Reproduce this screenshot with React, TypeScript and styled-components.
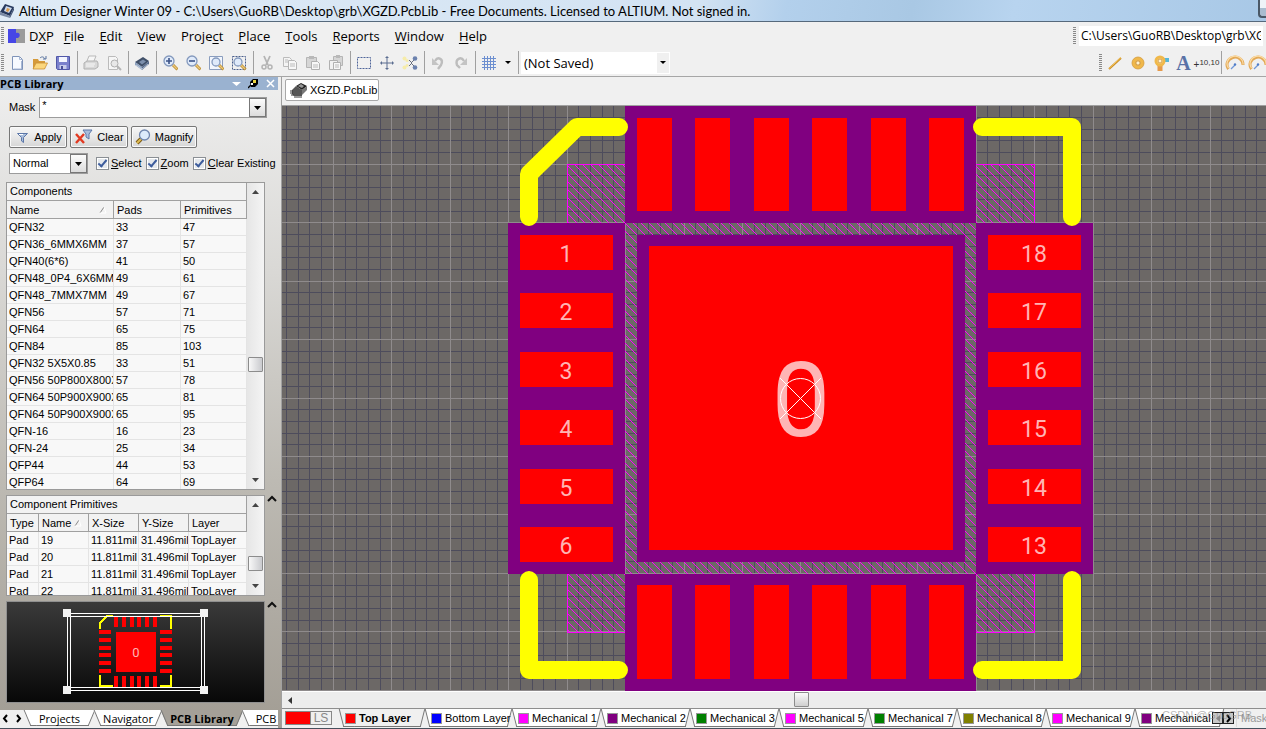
import React from 'react';
import styled, { createGlobalStyle } from 'styled-components';

const UI = '"Open Sans", "Noto Sans", sans-serif';
const TITLE = 'Lato, "Open Sans", sans-serif';
const SMALL = '"Liberation Sans", Arial, sans-serif';
const PAD_FONT = 'Roboto, "Liberation Sans", sans-serif';

const GlobalStyle = createGlobalStyle`
  *, *::before, *::after { box-sizing: border-box; }
  html, body { margin: 0; }
  body { background: #f0f0f0; color: #000; font: 11px/17px ${SMALL}; overflow: hidden; }
  button, input, select { font: inherit; color: inherit; margin: 0; }
  #root { min-height: 100vh; }
`;

/* ---------- frame ---------- */
const Frame = styled.div`
  display: flex;
  flex-direction: column;
  height: 100vh;
  border-bottom: 1px solid #46505c;
`;

const TitleBar = styled.header`
  display: flex;
  align-items: center;
  justify-content: space-between;
  flex: none;
  height: 22px;
  border-bottom: 1px solid #56697c;
  background: linear-gradient(100deg, #dfebf6 0%, #d3e3f3 55%, #b3d0ec 62%, #a9c8e4 72%, #b8d4ef 80%, #a8c8e6 100%);
  font: 13px/20px ${TITLE};
  white-space: nowrap;
  overflow: hidden;
`;

const TitleText = styled.h1`
  display: flex;
  align-items: center;
  gap: 3px;
  margin: 0;
  font: inherit;
`;

const WindowButton = styled.button`
  align-self: flex-start;
  flex: none;
  width: 8px;
  height: 18px;
  padding: 0;
  border: 1px solid #4a5866;
  border-width: 0 0 2px 2px;
  border-radius: 0 0 0 4px;
  background: linear-gradient(#eef3f8 50%, #a9bccf 50%);
`;

const MenuRow = styled.nav`
  display: flex;
  align-items: center;
  flex: none;
  height: 27px;
  background: #f0f0f0;
  font: 13px/20px ${UI};
`;

const Menus = styled.div`
  display: flex;
  flex: 1;
  gap: 15px;
  min-width: 0;
`;

const MenuButton = styled.button`
  padding: 0;
  border: 0;
  background: none;
  white-space: nowrap;
  u { text-underline-offset: 2px; }
`;

const DxpLabel = styled.span`
  display: flex;
  align-items: center;
  gap: 4px;
  margin: 0 -5px 0 3px;
`;

const Grip = styled.span`
  flex: none;
  width: 3px;
  height: 18px;
  margin: 0 1px;
  background: repeating-linear-gradient(#8a8a8a 0 1px, #f0f0f0 1px 2px);
`;

const PathInput = styled.input`
  flex: none;
  width: 184px;
  height: 20px;
  margin: 0 3px 0 2px;
  padding: 0 2px;
  border: 0;
  background: #fff;
  font-size: 12px;
`;

const ToolRow = styled.div`
  display: flex;
  align-items: center;
  flex: none;
  height: 28px;
  border-bottom: 1px solid #a6a6a6;
  background: #f0f0f0;
  overflow: hidden;
`;

const PlaceTools = styled.div`
  display: flex;
  align-items: center;
  margin: 0 -3px 0 auto;
`;

const ToolButton = styled.button<{ $w?: number }>`
  display: flex;
  align-items: center;
  justify-content: center;
  flex: none;
  width: ${p => p.$w ?? 23}px;
  height: 22px;
  padding: 0;
  border: 0;
  background: none;
`;

const Divider = styled.span`
  flex: none;
  width: 1px;
  height: 23px;
  margin: 0 1px 0 3px;
  background: #a0a0a0;
`;

const SavedCombo = styled.label`
  display: flex;
  align-items: center;
  width: 149px;
  height: 22px;
  margin-left: 1px;
  background: #fff;
  font: 13px/20px ${UI};
`;

const PlainSelect = styled.select`
  appearance: none;
  width: 100%;
  height: 100%;
  padding: 0 3px;
  border: 0;
  background: none;
  outline: 0;
`;

const FlatArrow = styled.span`
  display: flex;
  align-items: center;
  justify-content: center;
  flex: none;
  width: 12px;
  height: 20px;
  margin-right: 1px;
  background: #f0f0f0;
`;

/* ---------- body ---------- */
const Body = styled.div`
  display: flex;
  flex: 1;
  min-height: 0;
`;

const Side = styled.aside`
  display: flex;
  flex-direction: column;
  flex: none;
  width: 282px;
  border-right: 1px solid #a0a0a0;
  background: linear-gradient(#efefef, #d9d8d5 30%, #bdbab3 62%, #a29d94);
`;

const SideHeader = styled.header`
  display: flex;
  align-items: center;
  gap: 7px;
  flex: none;
  height: 13px;
  margin-right: 3px;
  padding-right: 3px;
  background: #9ab2d0;
`;

const SideTitle = styled.h2`
  flex: 1;
  margin: 0;
  font: bold 11px/13px ${UI};
`;

const BareButton = styled.button`
  display: flex;
  flex: none;
  padding: 0;
  border: 0;
  background: none;
`;

const Controls = styled.div`
  display: flex;
  flex-direction: column;
  gap: 5px;
  flex: none;
  padding: 7px 0 8px 9px;
`;

const ControlRow = styled.div<{ $gap: number; $pad?: number }>`
  display: flex;
  align-items: center;
  gap: ${p => p.$gap}px;
  padding-top: ${p => p.$pad ?? 0}px;
  white-space: nowrap;
`;

const ComboBox = styled.span<{ $w: number }>`
  display: flex;
  width: ${p => p.$w}px;
  height: 21px;
  border: 1px solid #9c9c9c;
  background: #fff;
`;

const MaskInput = styled.input`
  flex: 1;
  min-width: 0;
  padding: 0 2px 4px;
  border: 0;
  outline: 0;
  background: none;
`;

const DropArrow = styled.span`
  display: flex;
  align-items: center;
  justify-content: center;
  flex: none;
  width: 17px;
  border: 1px solid #777;
  background: linear-gradient(#fcfcfc, #dcdcdc);
`;

const PushButton = styled.button<{ $w: number }>`
  display: flex;
  align-items: center;
  justify-content: center;
  gap: 4px;
  width: ${p => p.$w}px;
  height: 22px;
  padding: 0;
  border: 1px solid #777;
  border-radius: 2px;
  background: linear-gradient(#f6f6f6, #e8e8e8 50%, #d6d6d6);
  box-shadow: inset 0 0 0 1px #fafafa;
`;

const Checks = styled.div`
  display: flex;
  gap: 4px;
  margin-left: 4px;
`;

const CheckLabel = styled.label`
  display: flex;
  align-items: center;
  gap: 2px;
`;

const Check = styled.input`
  appearance: none;
  display: flex;
  justify-content: center;
  width: 13px;
  height: 13px;
  border: 1px solid #8a8f94;
  background: #e4e8ec;
  box-shadow: inset 0 0 0 1px #fff;
  &:checked::after {
    content: '';
    width: 5px;
    height: 9px;
    border: solid #3c5c9c;
    border-width: 0 2px 2px 0;
    transform: rotate(40deg);
  }
`;

const ListFrame = styled.div<{ $h: number }>`
  display: flex;
  flex: none;
  width: 259px;
  height: ${p => p.$h}px;
  border: 1px solid #9a9a9a;
  background: #f0f0f0;
`;

const TableClip = styled.div`
  flex: 1;
  min-width: 0;
  overflow: hidden;
`;

const Table = styled.table`
  width: 100%;
  table-layout: fixed;
  border-collapse: separate;
  border-spacing: 0;
  caption {
    height: 18px;
    padding: 0 3px;
    border-right: 1px solid #a0a0a0;
    border-bottom: 1px solid #a0a0a0;
    text-align: left;
    background: #f2f2f2;
  }
  th, td {
    height: 17px;
    padding: 0 0 0 2px;
    line-height: 16px;
    font-weight: normal;
    text-align: left;
    white-space: nowrap;
    overflow: hidden;
  }
  th {
    height: 18px;
    padding-left: 3px;
    border-right: 1px solid #a0a0a0;
    border-bottom: 1px solid #a0a0a0;
    background: #f2f2f2;
  }
  td {
    border-right: 1px solid #e4e4e4;
    border-bottom: 1px solid #e4e4e4;
    background: #f8f8f8;
  }
`;

const HeadCell = styled.span`
  display: flex;
  align-items: center;
  justify-content: space-between;
  padding-right: 6px;
`;

const ScrollTrack = styled.div<{ $thumb: number }>`
  display: flex;
  flex-direction: column;
  align-items: center;
  justify-content: space-between;
  position: relative;
  flex: none;
  width: 17px;
  padding: 7px 0;
  background: linear-gradient(90deg, #e6e6e6, #f4f4f4);
  &::after {
    content: '';
    position: absolute;
    top: ${p => p.$thumb}%;
    left: 1px;
    width: 15px;
    height: 15px;
    border: 1px solid #8c8c8c;
    border-radius: 1px;
    background: linear-gradient(90deg, #f8f8f8, #c9cace);
  }
`;

const Section = styled.section`
  display: flex;
  align-items: flex-start;
  gap: 2px;
  flex: none;
  margin: 0 0 5px 6px;
`;

const Preview = styled.div`
  width: 259px;
  height: 102px;
  border: 1px solid #909090;
  background: linear-gradient(#3a3a3a, #080808);
`;

const PanelTabs = styled.div`
  display: flex;
  align-items: flex-start;
  gap: 5px;
  flex: none;
  height: 18px;
  margin: auto 3px 0 0;
  padding-left: 1px;
  background: #f0f0f0;
  overflow: hidden;
  font: 11px/15px ${UI};
`;

const NavArrows = styled.span`
  display: flex;
  gap: 8px;
  width: 29px;
  padding: 4px 0 0 1px;
`;

const SlantTab = styled.button<{ $w: number; $on?: boolean; $fill: string }>`
  position: relative;
  z-index: 0;
  display: flex;
  align-items: center;
  justify-content: center;
  flex: none;
  width: ${p => p.$w}px;
  height: 16px;
  padding: 0;
  border: 0;
  background: none;
  line-height: 15px;
  font-weight: ${p => (p.$on ? 'bold' : 'normal')};
  white-space: nowrap;
  &::before, &::after {
    content: '';
    position: absolute;
    z-index: -1;
    top: 0;
    bottom: 0;
    width: 80%;
    background: ${p => p.$fill};
    border: 0 solid #777;
    border-bottom-width: 1px;
  }
  &::before { left: 0; border-left-width: 1px; transform: skewX(23deg); }
  &::after { right: 0; border-right-width: 1px; transform: skewX(-23deg); }
`;

/* ---------- editor ---------- */
const Editor = styled.main`
  display: flex;
  flex-direction: column;
  flex: 1;
  min-width: 0;
`;

const DocTabs = styled.div`
  display: flex;
  align-items: center;
  flex: none;
  height: 29px;
  padding: 0 3px 2px;
  border-bottom: 1px solid #a0a0a0;
`;

const DocTab = styled.button`
  display: flex;
  align-items: center;
  gap: 2px;
  height: 22px;
  padding: 0 1px 0 4px;
  border: 1px solid #a8a8a8;
  border-radius: 2px;
  background: #fff;
`;

const Canvas = styled.div`
  flex: 1;
  min-height: 0;
  overflow: hidden;
  background: #6c6866;
  svg { display: block; }
`;

const HScroll = styled.div`
  display: flex;
  align-items: center;
  position: relative;
  flex: none;
  height: 17px;
  padding-left: 6px;
  border-top: 1px solid #fff;
  background: #ededed;
`;

const HThumb = styled.span`
  position: absolute;
  left: 52%;
  top: 0;
  width: 15px;
  height: 15px;
  border: 1px solid #8c8c8c;
  border-radius: 1px;
  background: linear-gradient(#fbfbfb, #d0d0d0);
`;

const LayerRow = styled.div`
  display: flex;
  position: relative;
  flex: none;
  height: 20px;
  padding-left: 3px;
  border-top: 1px solid #8e8e8e;
  overflow: hidden;
`;

const LayerSet = styled.button`
  display: flex;
  flex: none;
  width: 47px;
  height: 14px;
  margin: 2px 9px 0 0;
  padding: 0;
  border: 1px solid #888;
  background: #f0f0f0;
  color: #888;
  line-height: 13px;
  font-size: 12px;
  &::before { content: ''; width: 25px; height: 12px; background: #f00; border-right: 1px solid #888; }
  span { flex: 1; }
`;

const LayerTab = styled(SlantTab)`
  justify-content: flex-start;
  gap: 3px;
  height: 18px;
  margin-right: 4px;
  padding-left: 4px;
  &::before { transform: skewX(14deg); }
  &::after { transform: skewX(-14deg); }
`;

const Swatch = styled.span<{ $c: string }>`
  flex: none;
  width: 11px;
  height: 11px;
  border: 1px solid #999;
  background: ${p => p.$c};
`;

const LayerTail = styled.div`
  display: flex;
  align-items: center;
  position: absolute;
  right: 0;
  top: 0;
  height: 18px;
  color: #9a9a9a;
`;

const TailLabel = styled.span`
  width: 30px;
  margin-left: 2px;
  padding-left: 4px;
  line-height: 18px;
  border-left: 1px solid #ddd;
  background: #f0f0f0;
  overflow: hidden;
`;

const TailArrow = styled.button`
  display: flex;
  align-items: center;
  justify-content: center;
  width: 11px;
  height: 12px;
  padding: 0;
  border: 1px solid #222;
  background: #c8c8c8;
`;

const Watermark = styled.span`
  position: absolute;
  right: 14px;
  top: -2px;
  color: #8889;
  font: 11px/17px ${SMALL};
`;

/* ---------- small glyphs ---------- */
const Down = ({ c = '#000', w = 7 }: { c?: string; w?: number }) => (
  <svg width={w} height={w > 6 ? 4 : 3} viewBox="0 0 7 4" preserveAspectRatio="none"><path d="M0 0h7L3.5 4z" fill={c} /></svg>
);
const Up = () => <svg width="7" height="4" viewBox="0 0 7 4"><path d="M0 4h7L3.5 0z" fill="#444" /></svg>;
const Left = ({ c = '#333' }: { c?: string }) => <svg width="4" height="7" viewBox="0 0 5 8" preserveAspectRatio="none"><path d="M5 0v8L0 4z" fill={c} /></svg>;
const Chevron = ({ dir }: { dir: 'l' | 'r' }) => (
  <svg width="6" height="9" viewBox="0 0 6 9" fill="none" stroke="#000" strokeWidth="2">
    <path d={dir === 'l' ? 'M5 1L2 4.500L5 8' : 'M1 1l3 3.500L1 8'} />
  </svg>
);
const Collapse = () => (
  <svg width="10" height="7" viewBox="0 0 10 7" fill="none" stroke="#111" strokeWidth="2"><path d="M1 6l4-4 4 4" /></svg>
);
const Sort = () => <svg width="8" height="8" viewBox="0 0 8 8" fill="none"><path d="M1 7L5 1" stroke="#888" /><path d="M5 1l2 6H1" stroke="#fff" /></svg>;

const Ic = ({ children, w = 16 }: { children: React.ReactNode; w?: number }) => (
  <svg width={w} height="16" viewBox={`0 0 ${w} 16`} fill="none" aria-hidden="true">{children}</svg>
);

const Chip = () => (
  <Ic>
    <path d="M1 7l8-5 6 4-7 6z" fill="#3f4f68" />
    <path d="M1 7v3l7 5v-3z" fill="#8ba0be" />
    <path d="M8 12v3l7-6V6z" fill="#566a8b" />
    <path d="M5 7l4-2.500 3 2-4 3z" fill="#7d90ad" />
    <path d="M2 10l6 4 6-5" stroke="#d5deea" strokeWidth=".7" />
  </Ic>
);
const AppMark = () => (
  <Ic>
    <path d="M0 9l5-8 9 3-4 9z" fill="#26385c" />
    <path d="M6 3l6 2-3 5-5-2z" fill="#cbd8ec" />
    <path d="M7 5l3 1-2 3-2-1z" fill="#d89a4a" />
    <path d="M0 9v3l10 3v-2z" fill="#7a8aa4" />
    <path d="M10 13v2l4-8V4z" fill="#3f4f70" />
  </Ic>
);
const Puzzle = () => (
  <svg width="17" height="16" viewBox="0 0 17 16">
    <path d="M8 1h9v14H8z" fill="#9b9b9b" />
    <path d="M0 1h8v4c5-2 5 6 0 5v5H0z" fill="#4646e6" />
  </svg>
);
const Lens = ({ x = 6, y = 6, r = 4.5, sign = '' }: { x?: number; y?: number; r?: number; sign?: string }) => (
  <>
    <path d={`M${x + r - 1} ${y + r - 1}l4.500 4.500`} stroke="#b98a2e" strokeWidth="3" />
    <path d={`M${x + r - 1} ${y + r - 1}l4 4`} stroke="#ecc878" strokeWidth="1.500" />
    <circle cx={x} cy={y} r={r} fill="#dfeafa" stroke="#8499bd" strokeWidth="1.300" />
    {sign && <path d={sign} stroke="#3c5489" strokeWidth="1.600" />}
  </>
);
const NewDoc = () => <Ic><path d="M3.500 1.500h7l3 3v10h-10z" fill="#f7faff" stroke="#7e93b8" /><path d="M10.500 1.500v3h3M12.500 6v8h-8" stroke="#a8b8d4" /></Ic>;
const OpenDoc = () => (
  <Ic><path d="M1 14V4h5l1 2h6v8z" fill="#d59a3a" /><path d="M1 14l3-6h11.500l-3 6z" fill="#fbd67c" stroke="#c98f35" strokeWidth=".8" /><path d="M8 3c2-2 4-1 5 1m1-3v3h-3" stroke="#58739f" /></Ic>
);
const SaveDoc = () => <Ic><path d="M1.500 1.500h13v13h-12l-1-1z" fill="#7a80cc" stroke="#5158a8" /><path d="M4 2h8v5H4z" fill="#f4f6ff" /><path d="M4.500 10h7v4h-7z" fill="#c7cbea" /><path d="M6 11h2v3H6z" fill="#484f98" /></Ic>;
const Printer = () => <Ic><path d="M4 6l2-5h7l-2 5" fill="#f6f6f6" stroke="#b9b9b9" /><path d="M1 8l3-2h10l1 2v4l-3 2H1z" fill="#d8d8d8" stroke="#b0b0b0" /><path d="M3 11h8M3 9h9" stroke="#f8f8f8" /></Ic>;
const PrintPreview = () => <Ic><path d="M2.500 1.500h7l2 2v11h-9z" fill="#f6f6f6" stroke="#bbb" /><path d="M11 11l4 4" stroke="#b5b5b5" strokeWidth="2" /><circle cx="8.500" cy="8.500" r="3.500" fill="#e8e8e8" stroke="#b0b0b0" /></Ic>;
const ZoomIn = () => <Ic><Lens x={7} y={6} r={5} sign="M4 6h6M7 3v6" /></Ic>;
const ZoomOut = () => <Ic><Lens x={7} y={6} r={5} sign="M4 6h6" /></Ic>;
const ZoomDoc = () => <Ic><path d="M1.500 1.500h13v13h-13z" fill="#f2f6fd" stroke="#8a9dbe" /><Lens x={8} y={7} r={4} /></Ic>;
const ZoomArea = () => <Ic><path d="M1.500 1.500h13v13h-13z" stroke="#4a5f8c" strokeDasharray="2 1" /><Lens x={7} y={7} r={4} /></Ic>;
const Cut = () => <Ic><path d="M5 1l4 9M11 1L7 10" stroke="#b4b4b4" strokeWidth="1.800" /><circle cx="5" cy="12" r="2" stroke="#b4b4b4" strokeWidth="1.500" /><circle cx="11" cy="12" r="2" stroke="#b4b4b4" strokeWidth="1.500" /></Ic>;
const Copy = () => <Ic><path d="M1.500 2.500h6l2 2v7h-8z" fill="#f4f4f4" stroke="#bbb" /><path d="M6.500 5.500h6l2 2v7h-8z" fill="#f7f7f7" stroke="#b5b5b5" /><path d="M3 5h3M3 7h3M8 9h5M8 11h5" stroke="#bbb" /></Ic>;
const Paste = () => <Ic><path d="M1.500 2.500h10v10h-10z" fill="#d6d6d6" stroke="#b5b5b5" /><path d="M4 1h5v3H4z" fill="#b9b9b9" /><path d="M6.500 6.500h6l2 2v6h-8z" fill="#f7f7f7" stroke="#b0b0b0" /><path d="M8 10h5M8 12h5" stroke="#bbb" /></Ic>;
const PasteMany = () => <Ic><path d="M5.500 1.500h9v9h-9z" fill="#d6d6d6" stroke="#b5b5b5" /><path d="M8 0h4v3H8z" fill="#b9b9b9" /><path d="M1.500 5.500h8v9h-8z" fill="#f1f1f1" stroke="#b0b0b0" /><path d="M5.500 7.500h7v7h-7z" fill="#f7f7f7" stroke="#b0b0b0" /><path d="M7 10h4M7 12h4" stroke="#bbb" /></Ic>;
const Marquee = () => <Ic><path d="M1.500 2.500h13v11h-13z" stroke="#4f659a" strokeDasharray="2 1" /></Ic>;
const Move = () => <Ic><path d="M8 2v12M2 8h12" stroke="#5b6d90" /><path d="M8 1l2 2H6zM8 15l2-2H6zM1 8l2-2v4zM15 8l-2-2v4z" fill="#5b6d90" /></Ic>;
const Deselect = () => <Ic><path d="M7 5l3 3-3 3M13 4l-4 4 4 4" stroke="#666c7c" /><g fill="#f6ecaa"><circle cx="2.500" cy="3.500" r="2" /><circle cx="5" cy="5.500" r="1.500" /><circle cx="2.500" cy="12.500" r="2" /><circle cx="5" cy="10.500" r="1.500" /></g><g fill="#6c82ae"><circle cx="13" cy="3.500" r="2.300" /><circle cx="13" cy="12.500" r="2.300" /></g></Ic>;
const Undo = () => <Ic><path d="M5 6c3-5 9-2 6 4l-3 4" stroke="#bdbdbd" strokeWidth="2.400" /><path d="M2 3v7h7z" fill="#c4c4c4" /></Ic>;
const Redo = () => <Ic><path d="M11 6C8 1 2 4 4 10l3 3" stroke="#bdbdbd" strokeWidth="2.400" /><path d="M14 3v7H7z" fill="#c4c4c4" /></Ic>;
const GridIcon = () => <Ic><path d="M3.500 1v14M6.500 1v14M9.500 1v14M12.500 1v14M1 3.500h14M1 6.500h14M1 9.500h14M1 12.500h14" stroke="#6d8fd0" /></Ic>;
const LineIcon = () => <Ic><path d="M2 14L14 3" stroke="#c98f2b" strokeWidth="2" /><path d="M2 13.500L14 2.500" stroke="#f6c454" /></Ic>;
const PadIcon = () => <Ic><circle cx="8" cy="8" r="4.200" stroke="#f0b84a" strokeWidth="3.600" /><circle cx="8" cy="8" r="6" stroke="#d39a3c" strokeWidth=".8" /><circle cx="8" cy="8" r="2.200" fill="#fff2cf" stroke="#c98a2b" /></Ic>;
const ViaIcon = () => <Ic><path d="M4.500 8h5v8h-5z" fill="#e69a4a" /><path d="M9 3h7v4H9z" fill="#56b6d8" /><circle cx="7" cy="6" r="4" fill="#fff2cf" stroke="#f0b84a" strokeWidth="3" /><circle cx="7" cy="6" r="2" stroke="#c98a2b" strokeWidth=".8" /></Ic>;
const TextIcon = styled.span`
  color: #5a72a6;
  font: bold 20px/22px "Liberation Serif", "Times New Roman", serif;
`;
const CoordIcon = styled.span`
  color: #333;
  font: 8px/12px ${SMALL};
  white-space: nowrap;
  sub { font-size: 10px; line-height: 8px; }
`;
const ArcIcon = () => (
  <Ic w={20}>
    <path d="M3.500 14A8 7.500 0 1 1 18 10" stroke="#e3a957" strokeWidth="3" />
    <path d="M3.500 13A8 7.500 0 1 1 18 9.500" stroke="#fbdca6" strokeWidth="1.200" />
    <path d="M6 14l4-4" stroke="#6f97d8" strokeWidth="1.200" />
    <circle cx="10" cy="9.500" r="1.200" fill="#4f7cc8" />
  </Ic>
);
const Funnel = () => <Ic><path d="M3.500 4.500h10l-4 4v5l-2-1.500V8.500z" fill="#a9bddb" stroke="#5c77a8" /><path d="M5 5.500h4" stroke="#fff" /></Ic>;
const ClearIcon = () => <Ic w={19}><path d="M9 1h9l-3 4v5l-3-2V5z" fill="#a9bddb" stroke="#5c77a8" /><path d="M2 5l8 9M10 5l-8 9" stroke="#e23a22" strokeWidth="2.400" /></Ic>;
const MagnifyIcon = () => <Ic><path d="M6 10l-4 4" stroke="#7d5b16" strokeWidth="4" /><path d="M6 10l-4 4" stroke="#e0bd52" strokeWidth="2" /><circle cx="9.500" cy="6" r="5" fill="#dcebfb" stroke="#7086ae" strokeWidth="1.300" /></Ic>;
const PinIcon = () => <svg width="11" height="11" viewBox="0 0 11 11"><path d="M0 10l3-3" stroke="#000" strokeWidth="1.300" /><path d="M2 4l3-3h5v5L7 9H3z" fill="#000" /><path d="M5 2h3v3H5z" fill="#ecd53e" /><path d="M3 5h2v2H3z" fill="#fff" /></svg>;
const CloseIcon = () => <svg width="9" height="9" viewBox="0 0 9 9"><path d="M1 1l7 7M8 1L1 8" stroke="#fff" strokeWidth="1.500" /></svg>;
const LibIcon = () => <Ic w={18}><path d="M6 4l5-3 6 3-5 4z" fill="#222" /><path d="M2 8l4-4 6 4v6H4l-2-2z" fill="#555" /><path d="M12 8l5-4v4l-5 5z" fill="#777" /><path d="M0 9h3M0 11h3M1 13h3M4 15h8M8 4l3 2" stroke="#333" /><path d="M8 4l3-2 3 2-2 2z" fill="#999" /></Ic>;

/* ---------- data ---------- */
const menus = ['_File', '_Edit', '_View', 'Proje_ct', '_Place', '_Tools', '_Reports', '_Window', '_Help'];

const components: [string, number, number][] = [
  ['QFN32', 33, 47], ['QFN36_6MMX6MM', 37, 57], ['QFN40(6*6)', 41, 50], ['QFN48_0P4_6X6MM_', 49, 61],
  ['QFN48_7MMX7MM', 49, 67], ['QFN56', 57, 71], ['QFN64', 65, 75], ['QFN84', 85, 103],
  ['QFN32 5X5X0.85', 33, 51], ['QFN56 50P800X800X', 57, 78], ['QFN64 50P900X900X', 65, 81],
  ['QFN64 50P900X900X', 65, 95], ['QFN-16', 16, 23], ['QFN-24', 25, 34], ['QFP44', 44, 53], ['QFP64', 64, 69],
];

const layers: [string, string][] = [
  ['Mechanical 1', '#f0f'], ['Mechanical 2', '#800080'], ['Mechanical 3', '#008000'], ['Mechanical 5', '#f0f'],
  ['Mechanical 7', '#008000'], ['Mechanical 8', '#808000'], ['Mechanical 9', '#f0f'], ['Mechanical 10', '#800080'],
];

const Mnemonic = ({ text }: { text: string }) => {
  const i = text.indexOf('_');
  return <>{text.slice(0, i)}<u>{text[i + 1]}</u>{text.slice(i + 2)}</>;
};

/* ---------- footprint drawing ---------- */
const STEP = 58.45;
const range = (n: number) => Array.from({ length: n }, (_, i) => i);

function Footprint() {
  const lines = (major: boolean) =>
    range(240).flatMap(i => {
      const k = i - 25;
      if ((k % 5 === 0) !== major) return [];
      const x = Math.round(226.2 + (k * STEP) / 5);
      const y = Math.round(116.2 + (k * STEP) / 5);
      return [`M${x + 0.5} 0V3000`, `M0 ${y + 0.5}H3000`];
    }).join('');
  const at = range(6).map(i => Math.round(i * STEP));
  return (
    <svg width="100%" height="100%" role="img" aria-label="QFN footprint">
      <defs>
        <pattern id="hatch" x="2" width="8" height="8" patternUnits="userSpaceOnUse">
          <path d={range(8).map(i => `M${i} ${i}h1v1h-1z`).join('')} fill="#f0f" />
        </pattern>
      </defs>
      <g shapeRendering="crispEdges">
        <path d={lines(false)} stroke="#4d4c5c" />
        <path d={lines(true)} stroke="#8f8b8c" />
        <path d="M285 58h58v59h-58zM694 58h59v59h-59zM285 468h58v59h-58zM694 468h59v59h-59zM343 117h351v351H343z" fill="url(#hatch)" />
        <path d="M285.500 117V58.500H343M694 58.500h58.500V117M285.500 468v58.500H343M694 526.500h58.500V468" stroke="#f0f" fill="none" />
        <path d="M343 0h351v117H343zM343 468h351v117H343zM226 117h117v351H226zM694 117h117v351H694zM355 129h328v327H355z" fill="#800080" />
        <path d="M367 140h304v304H367z" fill="#f00" />
        {at.map(d => (
          <g key={d} fill="#f00">
            <rect x={355 + d} y="12" width="35" height="93" />
            <rect x={355 + d} y="479" width="35" height="94" />
            <rect x="238" y={129 + d} width="93" height="35" />
            <rect x="706" y={129 + d} width="93" height="35" />
          </g>
        ))}
      </g>
      <g fill="none" stroke="#ff0" strokeWidth="18" strokeLinecap="round" strokeLinejoin="round">
        <path d="M247 111V68L295 21H337M700 21H790V111M247 474V564H337M790 474V564H700" />
      </g>
      <g fill="#ffb4b4" fontFamily={PAD_FONT} textAnchor="middle">
        <g fontSize="23">
          {at.map((d, i) => (
            <React.Fragment key={d}>
              <text x="284" y={156 + d}>{i + 1}</text>
              <text x="752" y={156 + d}>{18 - i}</text>
            </React.Fragment>
          ))}
        </g>
        <text x="519" y="330" fontSize="104">0</text>
      </g>
      <g fill="none" stroke="#fff">
        <circle cx="518.500" cy="292.500" r="20" />
        <path d="M498 272l41 41M539 272l-41 41" />
      </g>
    </svg>
  );
}

function MiniFootprint() {
  const at = [0, 8, 16, 23, 31, 39];
  return (
    <svg width="257" height="100" viewBox="7 602 257 100" role="img" aria-label="Footprint preview" shapeRendering="crispEdges">
      <path d="M116 632h40v40h-40z" fill="#f00" />
      {at.map(d => (
        <g key={d} fill="#f00">
          <rect x={114 + d} y="616" width="4" height="11" />
          <rect x={114 + d} y="676" width="4" height="11" />
          <rect x="99" y={630 + d} width="12" height="4" />
          <rect x="160" y={630 + d} width="12" height="4" />
        </g>
      ))}
      <path d="M100 629v-6l7-7h6M160 616h11v13M100 675v11h13M160 686h11v-11" fill="none" stroke="#ff0" strokeWidth="2" />
      <path d="M67.500 613.500h137v77h-137zM70.500 616.500h131v71h-131z" fill="none" stroke="#fff" />
      <path d="M63 609h8v8h-8zM200 609h8v8h-8zM63 686h8v8h-8zM200 686h8v8h-8z" fill="#f2f2f2" />
      <text x="136" y="657" fill="#ffb4b4" fontSize="13" textAnchor="middle" fontFamily={PAD_FONT}>0</text>
    </svg>
  );
}

const mainTools: [string, React.ReactNode][][] = [
  [['New', <NewDoc />], ['Open', <OpenDoc />], ['Save', <SaveDoc />]],
  [['Print', <Printer />], ['Print preview', <PrintPreview />]],
  [['Devices', <Chip />]],
  [['Zoom in', <ZoomIn />], ['Zoom out', <ZoomOut />], ['Fit document', <ZoomDoc />], ['Zoom area', <ZoomArea />]],
  [['Cut', <Cut />], ['Copy', <Copy />], ['Paste', <Paste />], ['Rubber stamp', <PasteMany />]],
  [['Select area', <Marquee />], ['Move', <Move />], ['Deselect', <Deselect />]],
  [['Undo', <Undo />], ['Redo', <Redo />]],
];

export default function App() {
  return (
    <Frame>
      <GlobalStyle />
      <TitleBar>
        <TitleText><AppMark />Altium Designer Winter 09 - C:\Users\GuoRB\Desktop\grb\XGZD.PcbLib - Free Documents. Licensed to ALTIUM. Not signed in.</TitleText>
        <WindowButton aria-label="Minimize" />
      </TitleBar>
      <MenuRow>
        <Grip />
        <Menus>
          <MenuButton><DxpLabel><Puzzle /><span>D<u>X</u>P</span></DxpLabel></MenuButton>
          {menus.map(m => <MenuButton key={m}><Mnemonic text={m} /></MenuButton>)}
        </Menus>
        <Grip />
        <PathInput aria-label="Path" defaultValue="C:\Users\GuoRB\Desktop\grb\XGZD.PcbLib" />
      </MenuRow>
      <ToolRow>
        <Grip />
        {mainTools.map((group, g) => (
          <React.Fragment key={g}>
            {group.map(([label, icon]) => <ToolButton key={label} aria-label={label}>{icon}</ToolButton>)}
            <Divider />
          </React.Fragment>
        ))}
        <ToolButton aria-label="Grid"><GridIcon /></ToolButton>
        <ToolButton $w={15} aria-label="Grid options"><Down w={6} /></ToolButton>
        <Divider />
        <SavedCombo>
          <PlainSelect aria-label="Saved filter"><option>(Not Saved)</option></PlainSelect>
          <FlatArrow><Down w={6} /></FlatArrow>
        </SavedCombo>
        <PlaceTools>
          <Grip />
          <ToolButton aria-label="Place line"><LineIcon /></ToolButton>
          <ToolButton aria-label="Place pad"><PadIcon /></ToolButton>
          <ToolButton aria-label="Place via"><ViaIcon /></ToolButton>
          <ToolButton aria-label="Place string"><TextIcon>A</TextIcon></ToolButton>
          <ToolButton aria-label="Place coordinate"><CoordIcon><sub>+</sub>10,10</CoordIcon></ToolButton>
          <Divider />
          <ToolButton aria-label="Arc by center"><ArcIcon /></ToolButton>
          <ToolButton aria-label="Arc by edge"><ArcIcon /></ToolButton>
        </PlaceTools>
      </ToolRow>
      <Body>
        <Side>
          <SideHeader>
            <SideTitle>PCB Library</SideTitle>
            <BareButton aria-label="Panel menu"><Down c="#fff" w={9} /></BareButton>
            <BareButton aria-label="Pin"><PinIcon /></BareButton>
            <BareButton aria-label="Close"><CloseIcon /></BareButton>
          </SideHeader>
          <Controls>
            <ControlRow $gap={4}>
              <label htmlFor="mask">Mask</label>
              <ComboBox $w={228}>
                <MaskInput id="mask" defaultValue="*" />
                <DropArrow><Down /></DropArrow>
              </ComboBox>
            </ControlRow>
            <ControlRow $gap={3} $pad={3}>
              <PushButton $w={58}><Funnel />Apply</PushButton>
              <PushButton $w={58}><ClearIcon />Clear</PushButton>
              <PushButton $w={66}><MagnifyIcon />Magnify</PushButton>
            </ControlRow>
            <ControlRow $gap={4}>
              <ComboBox $w={79}>
                <PlainSelect aria-label="Mode"><option>Normal</option></PlainSelect>
                <DropArrow><Down /></DropArrow>
              </ComboBox>
              <Checks>
                {['_Select', '_Zoom', '_Clear Existing'].map(t => (
                  <CheckLabel key={t}><Check type="checkbox" defaultChecked /><span><Mnemonic text={t} /></span></CheckLabel>
                ))}
              </Checks>
            </ControlRow>
          </Controls>
          <Section>
            <ListFrame $h={308}>
              <TableClip>
                <Table>
                  <caption>Components</caption>
                  <colgroup><col width="107" /><col width="67" /><col width="66" /></colgroup>
                  <thead><tr><th><HeadCell>Name<Sort /></HeadCell></th><th>Pads</th><th>Primitives</th></tr></thead>
                  <tbody>{components.map((r, i) => <tr key={i}>{r.map((c, j) => <td key={j}>{c}</td>)}</tr>)}</tbody>
                </Table>
              </TableClip>
              <ScrollTrack $thumb={57}><Up /><Down c="#444" /></ScrollTrack>
            </ListFrame>
          </Section>
          <Section>
            <ListFrame $h={101}>
              <TableClip>
                <Table>
                  <caption>Component Primitives</caption>
                  <colgroup><col width="32" /><col width="50" /><col width="50" /><col width="50" /><col width="58" /></colgroup>
                  <thead><tr><th>Type</th><th><HeadCell>Name<Sort /></HeadCell></th><th>X-Size</th><th>Y-Size</th><th>Layer</th></tr></thead>
                  <tbody>
                    {[19, 20, 21, 22].map(n => (
                      <tr key={n}><td>Pad</td><td>{n}</td><td>11.811mil</td><td>31.496mil</td><td>TopLayer</td></tr>
                    ))}
                  </tbody>
                </Table>
              </TableClip>
              <ScrollTrack $thumb={61}><Up /><Down c="#444" /></ScrollTrack>
            </ListFrame>
            <BareButton aria-label="Collapse primitives"><Collapse /></BareButton>
          </Section>
          <Section>
            <Preview><MiniFootprint /></Preview>
            <BareButton aria-label="Collapse preview"><Collapse /></BareButton>
          </Section>
          <PanelTabs>
            <NavArrows>
              <BareButton aria-label="Previous panel"><Chevron dir="l" /></BareButton>
              <BareButton aria-label="Next panel"><Chevron dir="r" /></BareButton>
            </NavArrows>
            <SlantTab $w={65} $fill="#fff">Projects</SlantTab>
            <SlantTab $w={62} $fill="#fff">Navigator</SlantTab>
            <SlantTab $w={76} $fill="#a5a098" $on>PCB Library</SlantTab>
            <SlantTab $w={42} $fill="#fff">PCB</SlantTab>
          </PanelTabs>
        </Side>
        <Editor>
          <DocTabs><DocTab><LibIcon />XGZD.PcbLib</DocTab></DocTabs>
          <Canvas><Footprint /></Canvas>
          <HScroll><BareButton aria-label="Scroll left"><Left /></BareButton><HThumb /></HScroll>
          <LayerRow>
            <LayerSet><span>LS</span></LayerSet>
            <LayerTab $w={82} $fill="#f0f0f0" $on><Swatch $c="#f00" />Top Layer</LayerTab>
            <LayerTab $w={83} $fill="#fff"><Swatch $c="#00f" />Bottom Layer</LayerTab>
            {layers.map(([name, c]) => (
              <LayerTab key={name} $w={85} $fill="#fff"><Swatch $c={c} />{name}</LayerTab>
            ))}
            <LayerTail>
              <TailArrow aria-label="Previous layer"><Left c="#888" /></TailArrow>
              <TailArrow aria-label="Next layer"><Chevron dir="r" /></TailArrow>
              <TailLabel>Mask</TailLabel>
            </LayerTail>
            <Watermark>CSDN @GuoGRB</Watermark>
          </LayerRow>
        </Editor>
      </Body>
    </Frame>
  );
}
